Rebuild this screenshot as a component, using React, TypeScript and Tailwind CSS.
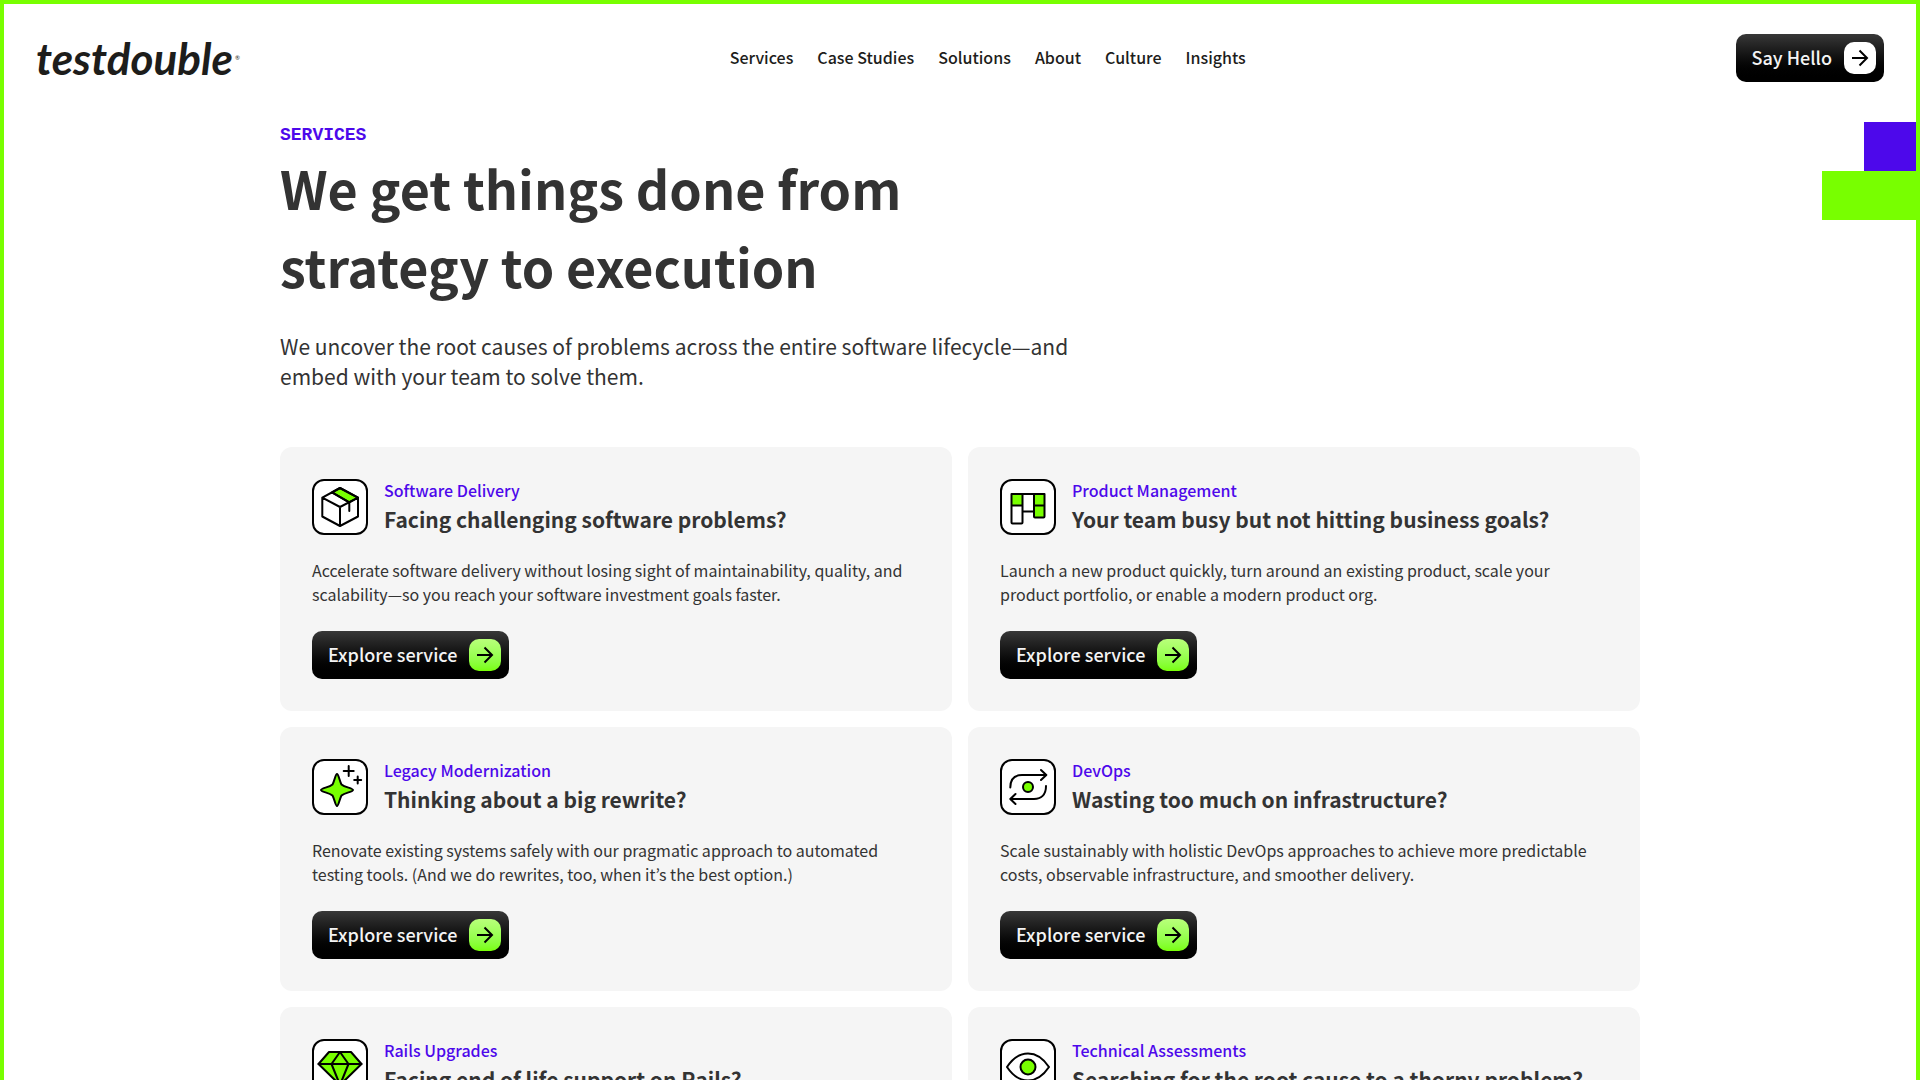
import React from 'react';
import { clsx } from 'clsx';

const BoxIcon = () => (
    <g>
        <path d="M28 9 46 18.7 37.3 23.3 20 13.4Z" fill="#78ff00" />
        <path d="M28 9 46 18.7V37.5L28 47 10.3 37.5V18.7ZM10.3 18.7 28 28 46 18.7M28 28V47M20 13.4 37.3 23.3V32" />
    </g>
);

const BoardIcon = () => (
    <g>
        <path d="M11.5 15H22.5V26.5H11.5ZM34 15H44.5V38H34Z" fill="#78ff00" stroke="none" />
        <path d="M11.5 15H44.5V37.5Q44.5 38.5 43.5 38.5H35Q34 38.5 34 37.5V15M22.5 15V43.5Q22.5 44.5 21.5 44.5H12.5Q11.5 44.5 11.5 43.5V15M11.5 26.5H22.5M34 26.5H44.5M22.5 32.5H34" />
    </g>
);

const SparkIcon = () => (
    <g>
        <path d="M25 15C26.5 15 27.5 22 29.5 25.5C33 28.5 41 29 41 31C41 33 33 33.5 29.5 36.5C27.5 40 26.5 47 25 47C23.5 47 22.5 40 20.5 36.5C17 33.5 9 33 9 31C9 29 17 28.5 20.5 25.5C22.5 22 23.5 15 25 15Z" fill="#78ff00" />
        <path d="M36.7 7V17M31.7 12H41.7M45.7 17.5V24.5M42.2 21H49.2" />
    </g>
);

const LoopIcon = () => (
    <g>
        <path d="M10.3 28.5C10.3 20 15 16 22 16H46M41 11 46.3 16 41 21M46 27C46 36 41 40 34 40H10.5M15.5 35 10.3 40 15.5 45" />
        <circle cx="28" cy="28" r="5" fill="#78ff00" />
    </g>
);

const GemIcon = () => (
    <g>
        <path d="M17 13H39L49.5 25 28 46 6.5 25Z" fill="#78ff00" />
        <path d="M6.5 25H49.5M28 13 19.5 25 28 46 36.5 25Z" />
    </g>
);

const EyeIcon = () => (
    <g>
        <path d="M7 28C13 19 20 14.5 28 14.5S43 19 49 28C43 37 36 41.5 28 41.5S13 37 7 28Z" />
        <circle cx="28" cy="28" r="7.5" fill="#78ff00" />
    </g>
);

const navLinks = ['Services', 'Case Studies', 'Solutions', 'About', 'Culture', 'Insights'];

const services = [
    {
        name: 'Software Delivery',
        title: 'Facing challenging software problems?',
        text: 'Accelerate software delivery without losing sight of maintainability, quality, and scalability—so you reach your software investment goals faster.',
        icon: BoxIcon,
    },
    {
        name: 'Product Management',
        title: 'Your team busy but not hitting business goals?',
        text: 'Launch a new product quickly, turn around an existing product, scale your product portfolio, or enable a modern product org.',
        icon: BoardIcon,
    },
    {
        name: 'Legacy Modernization',
        title: 'Thinking about a big rewrite?',
        text: 'Renovate existing systems safely with our pragmatic approach to automated testing tools. (And we do rewrites, too, when it’s the best option.)',
        icon: SparkIcon,
    },
    {
        name: 'DevOps',
        title: 'Wasting too much on infrastructure?',
        text: 'Scale sustainably with holistic DevOps approaches to achieve more predictable costs, observable infrastructure, and smoother delivery.',
        icon: LoopIcon,
    },
    { name: 'Rails Upgrades', title: 'Facing end of life support on Rails?', icon: GemIcon },
    { name: 'Technical Assessments', title: 'Searching for the root cause to a thorny problem?', icon: EyeIcon },
];

const ArrowLink: React.FC<{ label: string; light?: boolean }> = ({ label, light }) => (
    <a href="#" className="inline-flex h-12 items-center gap-3 rounded-[10px] bg-linear-to-b from-[#383838] to-black pl-4 pr-2 text-lg leading-6 font-medium text-[#f4f4f4]">
        <span className="pb-0.5">{label}</span>
        <span className={clsx('flex size-8 items-center justify-center rounded-[10px]', light ? 'bg-white' : 'bg-linear-to-b from-[#b8ff7a] to-[#78ff00]')}>
            <svg viewBox="0 0 32 32" className="size-8" fill="none" stroke="#000" strokeWidth="2" aria-hidden="true">
                <path d="M8 16H23M15.5 8.5 23 16 15.5 23.5" />
            </svg>
        </span>
    </a>
);

const App: React.FC = () => {
    return (
        <div className="relative min-h-screen border-4 border-[#78ff00] bg-white pb-16 font-['Noto_Sans_CJK_JP',sans-serif] text-[#333333]">
            <header className="flex items-center justify-between px-8 pt-[30px]">
                <a href="#" className="flex w-[204px] items-center justify-between font-['Lato',sans-serif] text-[44px] leading-12 font-bold italic text-[#1d1d1b]">
                    testdouble
                    <span className="text-[6px] leading-4 font-normal not-italic">®</span>
                </a>
                <nav className="flex gap-6 pb-0.5 text-base font-medium text-[#1d1d1b]">
                    {navLinks.map(link => (
                        <a key={link} href="#">{link}</a>
                    ))}
                </nav>
                <ArrowLink label="Say Hello" light />
            </header>

            <div className="absolute top-[118px] -right-1 flex flex-col items-end" aria-hidden="true">
                <div className="mr-1 h-[49px] w-[52px] bg-[#4d08eb]" />
                <div className="h-[49px] w-[98px] bg-[#78ff00]" />
            </div>

            <main className="mx-auto max-w-[1360px] pt-[41px]">
                <p className="font-['Liberation_Mono',monospace] text-lg leading-6 font-bold text-[#4d08eb]">SERVICES</p>
                <h1 className="mt-0.5 max-w-[800px] text-[52px] leading-[78px] font-bold">We get things done from strategy to execution</h1>
                <p className="mt-[26px] max-w-[800px] text-[21px] leading-[30px]">
                    We uncover the root causes of problems across the entire software lifecycle—and embed with your team to solve them.
                </p>

                <div className="mt-14 grid grid-cols-2 gap-4">
                    {services.map(({ name, title, text, icon: Icon }) => (
                        <article key={name} className="rounded-xl bg-[#f5f5f5] p-8">
                            <div className="flex gap-4">
                                <svg viewBox="0 0 56 56" className="size-14 shrink-0" fill="none" stroke="#000" strokeWidth="2" strokeLinejoin="round" strokeLinecap="round" aria-hidden="true">
                                    <rect x="1" y="1" width="54" height="54" rx="11" fill="#fff" />
                                    <Icon />
                                </svg>
                                <div>
                                    <p className="text-base leading-[22px] font-medium text-[#4d08eb]">{name}</p>
                                    <h2 className="text-[21px] leading-9 font-bold">{title}</h2>
                                </div>
                            </div>
                            {text && <p className="mt-[21px] text-base leading-6">{text}</p>}
                            <div className="mt-[25px] flex">
                                <ArrowLink label="Explore service" />
                            </div>
                        </article>
                    ))}
                </div>
            </main>
        </div>
    );
};

export default App;
